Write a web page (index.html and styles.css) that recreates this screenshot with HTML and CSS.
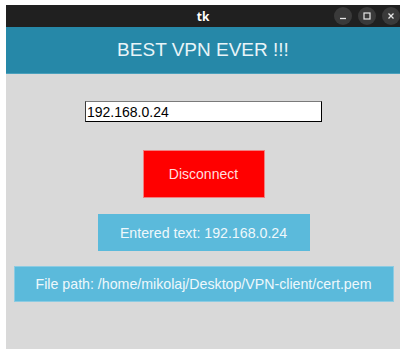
FILE: index.html
```html
<!DOCTYPE html>
<html lang="en">
<head>
  <meta charset="UTF-8">
  <meta name="viewport" content="width=device-width, initial-scale=1.0">
  <title>tk</title>
  <link rel="stylesheet" href="styles.css">
</head>
<body>
  <div class="window">
    <div class="titlebar">
      <span class="title">tk</span>
      <div class="controls">
        <span class="ctl">
          <svg width="16" height="16" viewBox="0 0 16 16"><path d="M5 10.5h6" stroke="#e6e6e6" stroke-width="1.3"/></svg>
        </span>
        <span class="ctl">
          <svg width="16" height="16" viewBox="0 0 16 16"><rect x="5" y="5" width="6" height="6" fill="none" stroke="#e6e6e6" stroke-width="1.2"/></svg>
        </span>
        <span class="ctl">
          <svg width="16" height="16" viewBox="0 0 16 16"><path d="M5.5 5.5l5 5M10.5 5.5l-5 5" stroke="#e6e6e6" stroke-width="1.3"/></svg>
        </span>
      </div>
    </div>
    <div class="header">BEST VPN EVER !!!</div>
    <div class="content">
      <input type="text" class="entry" value="192.168.0.24">
      <button class="disconnect">Disconnect</button>
      <div class="label entered">Entered text: 192.168.0.24</div>
      <div class="label path">File path: /home/mikolaj/Desktop/VPN-client/cert.pem</div>
    </div>
  </div>
</body>
</html>
```

FILE: styles.css
```css
body {
  margin: 0;
  background: #ffffff;
  font-family: "Liberation Sans", Arial, sans-serif;
}
.window {
  margin: 5px 0 0 6px;
  width: 394px;
  height: 344px;
  background: #d9d9d9;
  display: flex;
  flex-direction: column;
}
.titlebar {
  height: 22px;
  background: #202020;
  position: relative;
  display: flex;
  align-items: center;
  justify-content: center;
}
.title {
  color: #ffffff;
  font-family: "Noto Sans", sans-serif;
  font-weight: bold;
  font-size: 12px;
}
.controls {
  position: absolute;
  right: 0;
  top: 2px;
  display: flex;
  gap: 6px;
}
.ctl {
  width: 18px;
  height: 18px;
  border-radius: 50%;
  background: #3a3a3a;
  display: flex;
  align-items: center;
  justify-content: center;
}
.header {
  height: 46px;
  background: #2688a8;
  border-bottom: 1px solid #4aa0bc;
  color: #e8f4f8;
  font-size: 19px;
  display: flex;
  align-items: center;
  justify-content: center;
}
.content {
  display: flex;
  flex-direction: column;
  align-items: center;
  padding: 27px 0 0 1px;
}
.entry {
  width: 237px;
  height: 21px;
  box-sizing: border-box;
  margin: 0;
  padding: 0 1px;
  border: 1px solid #000000;
  border-top-color: #7a7a7a;
  border-left-color: #3a3a3a;
  background: #ffffff;
  font-family: "Liberation Sans", Arial, sans-serif;
  font-size: 14px;
  color: #000000;
  outline: none;
}
.disconnect {
  margin-top: 28px;
  width: 122px;
  height: 48px;
  background: #ff0000;
  border: 1px solid #f08080;
  color: #ffdede;
  font-family: "Liberation Sans", Arial, sans-serif;
  font-size: 14px;
  padding: 0;
}
.label {
  background: #5bbadb;
  color: #eef8fc;
  font-size: 14.2px;
  display: flex;
  align-items: center;
  justify-content: center;
  box-sizing: border-box;
}
.entered {
  margin-top: 16px;
  width: 212px;
  height: 37px;
}
.path {
  margin-top: 15px;
  width: 380px;
  height: 36px;
  border: 1px solid #8ccbe2;
}
```
